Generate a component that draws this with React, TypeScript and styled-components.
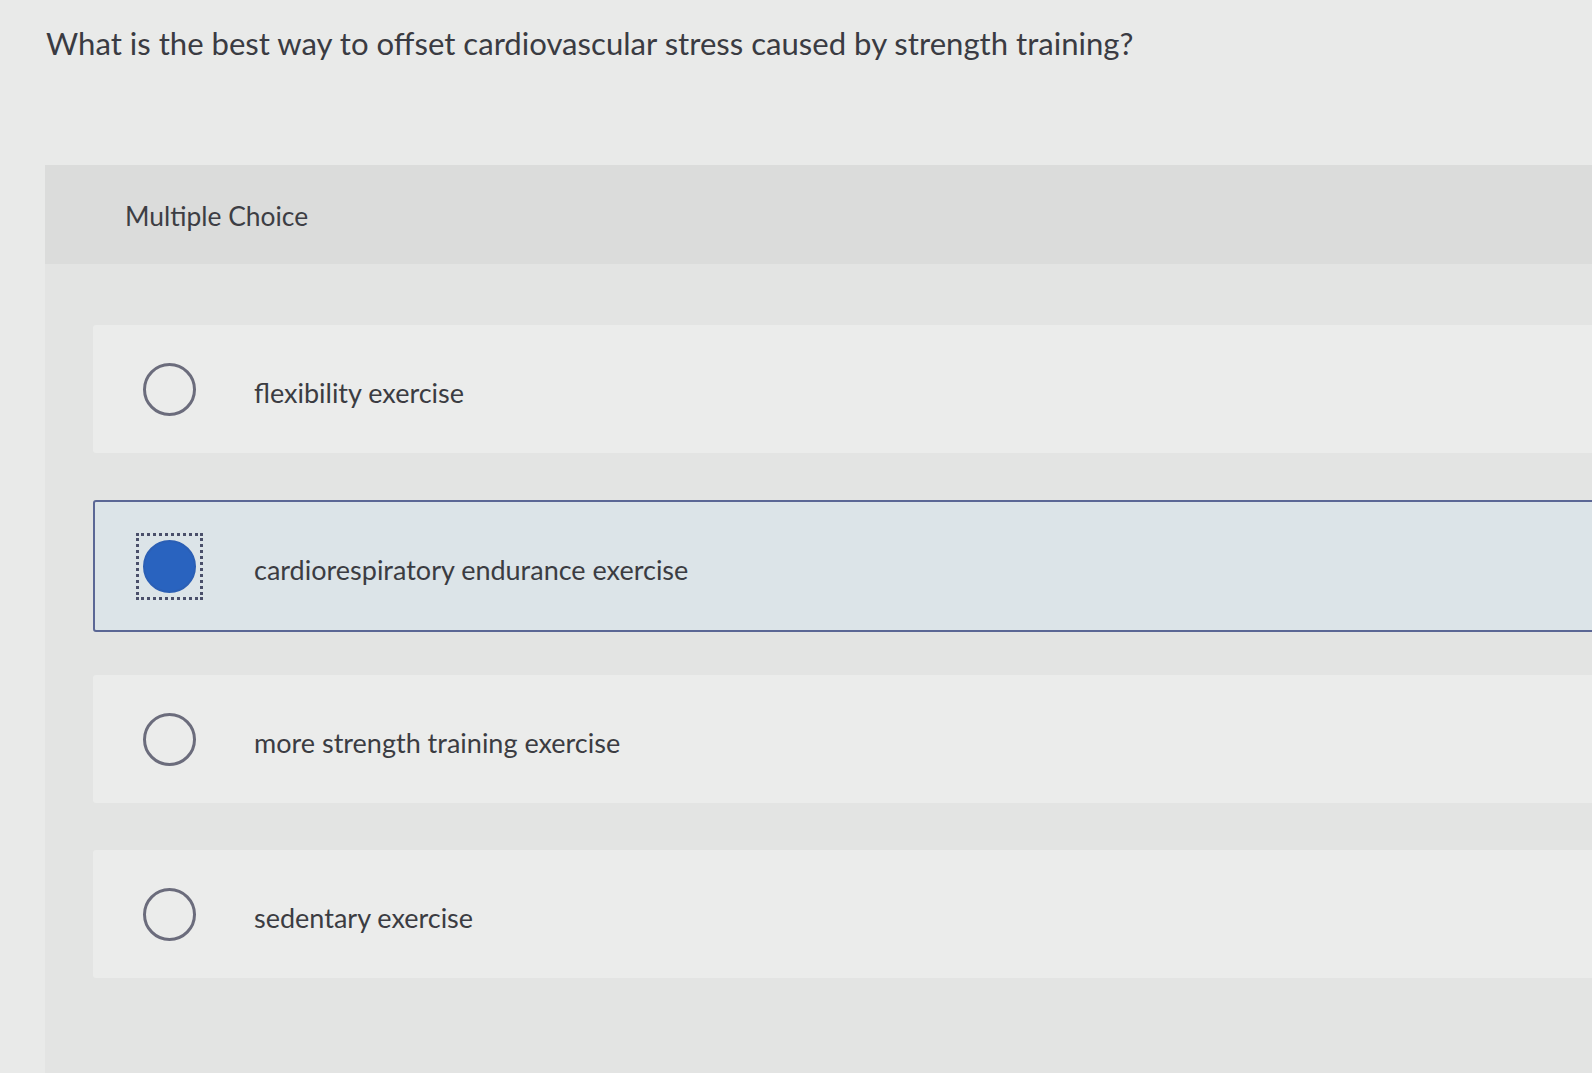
import styled, { createGlobalStyle } from 'styled-components';

const GlobalStyle = createGlobalStyle`
  html, body {
    margin: 0;
    padding: 0;
    background: #e9eae9;
    overflow: hidden;
  }
  body {
    font-family: Lato, "Open Sans", "Liberation Sans", sans-serif;
    color: #3b3c42;
  }
`;

const Page = styled.main`
  width: 1592px;
  height: 1073px;
  overflow: hidden;
  display: flex;
  flex-direction: column;
`;

const Question = styled.h1`
  margin: 25px 0 0 46px;
  font-size: 31.1px;
  line-height: 36px;
  font-weight: 400;
  color: #3a3b42;
`;

const Panel = styled.section`
  margin: 104px -40px 0 45px;
  flex: 1;
  display: flex;
  flex-direction: column;
  background: #e3e4e3;
`;

const PanelHeader = styled.div`
  height: 99px;
  display: flex;
  align-items: center;
  padding: 3px 0 0 80px;
  box-sizing: border-box;
  background: #dbdcdb;
  font-size: 26.4px;
  color: #3d3e44;
`;

const Options = styled.ul`
  list-style: none;
  margin: 0;
  padding: 61px 0 0 48px;
  display: flex;
  flex-direction: column;
  gap: 47px;
`;

const Option = styled.li<{ $selected?: boolean }>`
  height: ${(p) => (p.$selected ? '132px' : '128px')};
  margin-bottom: ${(p) => (p.$selected ? '-4px' : '0')};
  box-sizing: border-box;
  display: flex;
  align-items: center;
  padding-left: ${(p) => (p.$selected ? '48px' : '50px')};
  gap: 58px;
  border-radius: 3px;
  background: ${(p) => (p.$selected ? '#dce4e8' : '#ebeceb')};
  border: ${(p) => (p.$selected ? '2px solid #5b6795' : 'none')};
  font-size: 27px;
  color: #3b3c42;
`;

const Focus = styled.span<{ $on?: boolean }>`
  width: 53px;
  height: 53px;
  flex: none;
  display: flex;
  align-items: center;
  justify-content: center;
  outline: ${(p) => (p.$on ? '3px dotted #4a4f6a' : 'none')};
  outline-offset: 4px;
`;

const Radio = styled.span<{ $checked?: boolean }>`
  width: 53px;
  height: 53px;
  box-sizing: border-box;
  border-radius: 50%;
  border: ${(p) => (p.$checked ? '2px solid #2b5fb5' : '3px solid #6b6c7c')};
  background: ${(p) => (p.$checked ? '#2963bf' : 'transparent')};
`;

const Label = styled.span`
  line-height: 1;
  padding-top: 6px;
`;

const choices = [
  'flexibility exercise',
  'cardiorespiratory endurance exercise',
  'more strength training exercise',
  'sedentary exercise',
];

export default function App() {
  const picked = 1;
  return (
    <>
      <GlobalStyle />
      <Page>
        <Question>What is the best way to offset cardiovascular stress caused by strength training?</Question>
        <Panel>
          <PanelHeader>Multiple Choice</PanelHeader>
          <Options>
            {choices.map((c, i) => (
              <Option key={c} $selected={i === picked}>
                <Focus $on={i === picked}>
                  <Radio $checked={i === picked} />
                </Focus>
                <Label>{c}</Label>
              </Option>
            ))}
          </Options>
        </Panel>
      </Page>
    </>
  );
}
